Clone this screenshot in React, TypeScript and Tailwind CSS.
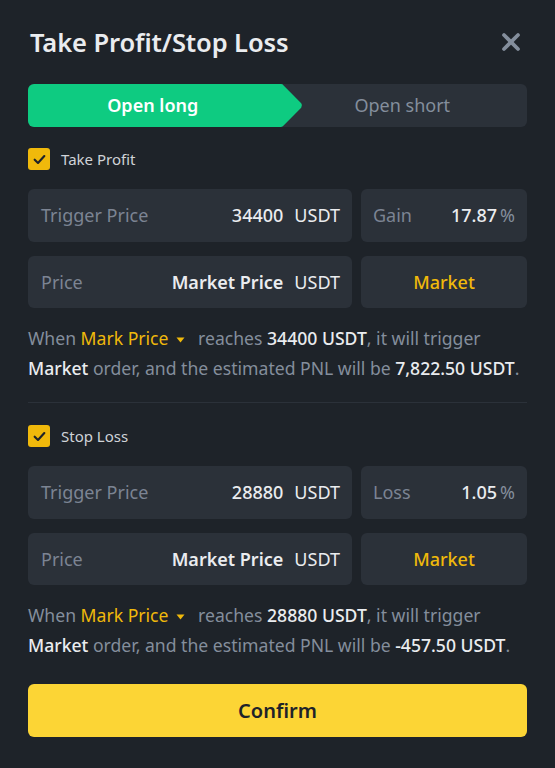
import React from 'react';
import { X } from 'lucide-react';

const CheckBox = ({ label }: { label: string }) => (
  <div className="flex items-center h-[22px] gap-[11px]">
    <div className="w-[22px] h-[22px] rounded-[3px] bg-[#f0b90b] flex items-center justify-center">
      <svg width="15" height="15" viewBox="0 0 14 14" fill="none">
        <path d="M2.5 7.2 L5.6 10.2 L11.5 3.8" stroke="#1e2329" strokeWidth="2" strokeLinecap="round" strokeLinejoin="round" />
      </svg>
    </div>
    <span className="text-[15px] text-[#d0d3d8]">{label}</span>
  </div>
);

const PriceRows = ({ trigger, kind, pct }: { trigger: string; kind: string; pct: string }) => (
  <>
    <div className="grid grid-cols-[324px_1fr] gap-[9px] mt-[19px]">
      <div className="h-[53px] rounded-[6px] bg-[#2b3139] flex items-center justify-between pl-[13px] pr-[12px]">
        <span className="text-[18px] text-[#7c8493]">Trigger Price</span>
        <span className="flex items-center gap-[11px] text-[18px]">
          <span className="text-[#eaecef] font-medium">{trigger}</span>
          <span className="text-[#eaecef]">USDT</span>
        </span>
      </div>
      <div className="h-[53px] rounded-[6px] bg-[#2b3139] flex items-center justify-between pl-[12px] pr-[12px]">
        <span className="text-[18px] text-[#7c8493]">{kind}</span>
        <span className="flex items-center gap-[3px] text-[18px]">
          <span className="text-[#eaecef] font-medium">{pct}</span>
          <span className="text-[#848e9c]">%</span>
        </span>
      </div>
    </div>
    <div className="grid grid-cols-[324px_1fr] gap-[9px] mt-[14px]">
      <div className="h-[52px] rounded-[6px] bg-[#2b3139] flex items-center justify-between pl-[13px] pr-[12px]">
        <span className="text-[18px] text-[#7c8493]">Price</span>
        <span className="flex items-center gap-[11px] text-[18px]">
          <span className="text-[#eaecef] font-semibold">Market Price</span>
          <span className="text-[#eaecef]">USDT</span>
        </span>
      </div>
      <div className="h-[52px] rounded-[6px] bg-[#2b3139] flex items-center justify-center">
        <span className="text-[18px] text-[#f0b90b] font-medium">Market</span>
      </div>
    </div>
  </>
);

const Description = ({ trigger, pnl }: { trigger: string; pnl: string }) => (
  <p className="mt-[15px] text-[17.6px] leading-[30px] text-[#848e9c]">
    When{' '}
    <span className="text-[#f0b90b]">
      Mark Price
      <svg className="inline-block ml-[7px] mr-[9px] align-middle" width="9" height="6" viewBox="0 0 9 6">
        <path d="M0.5 0.5 H8.5 L4.5 5.5 Z" fill="#f0b90b" />
      </svg>
    </span>{' '}
    reaches <span className="text-[#eaecef] font-medium">{trigger} USDT</span>, it will trigger
    <br />
    <span className="text-[#eaecef] font-medium">Market</span> order, and the estimated PNL will be{' '}
    <span className="text-[#eaecef] font-medium">{pnl} USDT</span>.
  </p>
);

export default function App() {
  return (
    <div className="min-h-screen bg-[#1e2329] px-[28px] pt-[26px] pb-[30px] font-['Noto_Sans',sans-serif]">
      <div className="flex items-center justify-between h-[32px] pl-[2px]">
        <h1 className="text-[25.5px] font-semibold text-[#eaecef] tracking-[-0.1px]">Take Profit/Stop Loss</h1>
        <X className="text-[#848e9c] mr-[2px]" size={28} strokeWidth={3.2} />
      </div>

      <div className="relative mt-[26px] h-[43px] rounded-[6px] bg-[#2b3139] flex">
        <div className="absolute left-0 top-0 h-full w-[253px] rounded-l-[6px] bg-[#0ecb81]" />
        <svg className="absolute left-[252px] top-0" width="23" height="43" viewBox="0 0 23 43">
          <path d="M0 0 H1 Q2.6 0 3.6 1.4 L21.2 19.3 Q23 21.5 21.2 23.7 L3.6 41.6 Q2.6 43 1 43 H0 Z" fill="#0ecb81" />
        </svg>
        <div className="relative flex-1 flex items-center justify-center text-[18px] font-semibold text-white">Open long</div>
        <div className="relative flex-1 flex items-center justify-center text-[18px] text-[#848e9c]">Open short</div>
      </div>

      <div className="mt-[21px]">
        <CheckBox label="Take Profit" />
      </div>
      <PriceRows trigger="34400" kind="Gain" pct="17.87" />
      <Description trigger="34400" pnl="7,822.50" />

      <div className="mt-[19px] h-px bg-[#2b3139]" />

      <div className="mt-[22px]">
        <CheckBox label="Stop Loss" />
      </div>
      <PriceRows trigger="28880" kind="Loss" pct="1.05" />
      <Description trigger="28880" pnl="-457.50" />

      <button className="mt-[24px] w-full h-[53px] rounded-[6px] bg-[#fcd535] text-[20px] font-semibold text-[#1e2329]">
        Confirm
      </button>
    </div>
  );
}
